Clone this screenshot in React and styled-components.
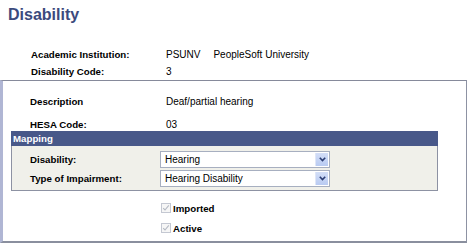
import React from 'react';
import styled, { createGlobalStyle } from 'styled-components';

const GlobalStyle = createGlobalStyle`
    html, body {
        margin: 0;
        padding: 0;
        background: #fff;
    }
    body {
        font-family: 'Liberation Sans', Arial, sans-serif;
        color: #000;
    }
`;

const Page = styled.div`
    width: 474px;
    height: 249px;
    overflow: hidden;
    padding-top: 5px;
    box-sizing: border-box;
`;

const Title = styled.h1`
    margin: 0 0 0 8px;
    font-size: 16px;
    line-height: 20px;
    font-weight: bold;
    color: #3b4a7d;
`;

const InfoGrid = styled.div`
    display: grid;
    grid-template-columns: ${(p) => p.$labelWidth}px auto;
    grid-template-rows: 18px 17px;
    align-items: center;
    padding-left: ${(p) => p.$left}px;
    margin-top: ${(p) => p.$top || 0}px;
`;

const Label = styled.div`
    font-size: 9.7px;
    font-weight: bold;
    white-space: nowrap;
`;

const Value = styled.div`
    font-size: 10px;
    white-space: nowrap;
    display: flex;
    gap: 13px;
`;

const Panel = styled.div`
    width: 467px;
    box-sizing: border-box;
    border-top: 1px solid #868a9b;
    border-left: 3px solid #b0b6d4;
    border-right: 1px solid #8d92a3;
    border-bottom: 2px solid #8a8f9e;
    padding: 10px 0 3px;
`;

const Row = styled.div`
    display: flex;
    align-items: center;
    height: ${(p) => p.$height}px;
    margin-top: ${(p) => p.$top || 0}px;
    padding-left: 27px;
`;

const RowLabel = styled(Label)`
    width: 136px;
`;

const Mapping = styled.div`
    margin-left: 8px;
    width: 427px;
`;

const MappingHeader = styled.div`
    height: 15px;
    line-height: 15px;
    background: #485889;
    color: #fff;
    font-size: 9.7px;
    font-weight: bold;
    padding-left: 2px;
`;

const MappingBody = styled.div`
    background: #f0f0ea;
    border: 1px solid #8d92a3;
    border-top: none;
    padding: 5px 0 3px 18px;
    display: flex;
    flex-direction: column;
    gap: 2px;
`;

const MapRow = styled.div`
    display: flex;
    align-items: center;
    height: 17px;
`;

const MapLabel = styled(Label)`
    width: 130px;
`;

const Select = styled.div`
    width: 170px;
    height: 17px;
    box-sizing: border-box;
    border: 1px solid #a7afc0;
    background: #fff;
    display: flex;
    align-items: stretch;
    font-size: 10px;
`;

const SelectText = styled.span`
    flex: 1;
    padding-left: 4px;
    line-height: 15px;
    white-space: nowrap;
`;

const Arrow = styled.span`
    width: 12px;
    margin: 1px;
    background: linear-gradient(#d3def7, #b9cbf2);
    border-left: 1px solid #dfe6f7;
    display: flex;
    align-items: center;
    justify-content: center;
`;

const Checks = styled.div`
    margin-top: 7px;
    padding-left: 158px;
`;

const CheckRow = styled.label`
    display: flex;
    align-items: center;
    height: 20px;
    gap: 2px;
    font-size: 9.7px;
    font-weight: bold;
`;

const Box = styled.span`
    width: 10px;
    height: 10px;
    box-sizing: border-box;
    border: 1px solid #c4c8d2;
    background: #f6f6f6;
    display: flex;
    align-items: center;
    justify-content: center;
`;

const Chevron = () => (
    <svg width="7" height="5" viewBox="0 0 7 5">
        <path d="M0.8 0.8 L3.5 3.6 L6.2 0.8" fill="none" stroke="#2c3e74" strokeWidth="1.6" />
    </svg>
);

const Tick = () => (
    <svg width="8" height="8" viewBox="0 0 8 8">
        <path d="M1.2 4.2 L3 6 L6.8 1.4" fill="none" stroke="#b3b8c2" strokeWidth="1.1" />
    </svg>
);

const Dropdown = ({ value }) => (
    <Select>
        <SelectText>{value}</SelectText>
        <Arrow><Chevron /></Arrow>
    </Select>
);

const Check = ({ children }) => (
    <CheckRow>
        <Box><Tick /></Box>
        {children}
    </CheckRow>
);

export default function App() {
    return (
        <Page>
            <GlobalStyle />
            <Title>Disability</Title>

            <InfoGrid $labelWidth={135} $left={31} $top={20}>
                <Label>Academic Institution:</Label>
                <Value><span>PSUNV</span><span>PeopleSoft University</span></Value>
                <Label>Disability Code:</Label>
                <Value>3</Value>
            </InfoGrid>

            <Panel>
                <Row $height={20}>
                    <RowLabel>Description</RowLabel>
                    <Value>Deaf/partial hearing</Value>
                </Row>
                <Row $height={14} $top={6}>
                    <RowLabel>HESA Code:</RowLabel>
                    <Value>03</Value>
                </Row>

                <Mapping>
                    <MappingHeader>Mapping</MappingHeader>
                    <MappingBody>
                        <MapRow>
                            <MapLabel>Disability:</MapLabel>
                            <Dropdown value="Hearing" />
                        </MapRow>
                        <MapRow>
                            <MapLabel>Type of Impairment:</MapLabel>
                            <Dropdown value="Hearing Disability" />
                        </MapRow>
                    </MappingBody>
                </Mapping>

                <Checks>
                    <Check>Imported</Check>
                    <Check>Active</Check>
                </Checks>
            </Panel>
        </Page>
    );
}
